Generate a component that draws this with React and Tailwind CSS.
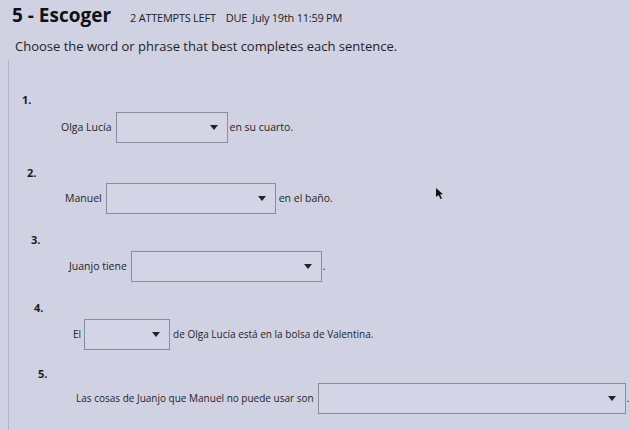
import React from "react";

function Select({ w }) {
  return (
    <div
      className="relative h-[31px] border border-[#8c8c98] bg-[#d4d4e7] shrink-0"
      style={{ width: w }}
    >
      <svg
        className="absolute right-[9px] top-[12px]"
        width="8"
        height="5"
        viewBox="0 0 8 5"
      >
        <polygon points="0,0 8,0 4,5" fill="#222" />
      </svg>
    </div>
  );
}

function Question({ n, nx, lx, mt, gap, small, children }) {
  return (
    <div style={{ marginTop: mt }}>
      <div
        className="text-[11px] leading-[14px] font-bold text-[#1b1b1f]"
        style={{ paddingLeft: nx }}
      >
        {n}.
      </div>
      <div
        className={
          small
            ? "flex items-center whitespace-nowrap text-[10px] text-[#1f1f24]"
            : "flex items-center whitespace-nowrap text-[10.5px] text-[#1f1f24]"
        }
        style={{ paddingLeft: lx, marginTop: gap }}
      >
        {children}
      </div>
    </div>
  );
}

export default function App() {
  return (
    <div
      className="relative w-[630px] h-[430px] overflow-hidden bg-[#d1d1e4]"
      style={{ fontFamily: '"Open Sans", "Noto Sans", sans-serif' }}
    >
      <div className="absolute left-[8px] top-[60px] bottom-0 w-px bg-[#b3b3c4]" />
      <div className="flex items-baseline pl-[12px] pt-[1px]">
        <span className="text-[19px] leading-[28px] font-bold text-[#111114]">
          5 - Escoger
        </span>
        <span className="ml-[19px] text-[11px] text-[#1d1d22] tracking-[-0.25px]">
          2 ATTEMPTS LEFT
        </span>
        <span className="ml-[10px] text-[11px] text-[#1d1d22] tracking-[-0.2px]">
          DUE
        </span>
        <span className="ml-[5px] text-[11px] text-[#1d1d22] tracking-[-0.25px]">
          July 19th 11:59 PM
        </span>
      </div>
      <div className="pl-[15px] mt-[8px] text-[13px] leading-[18px] text-[#1f1f24]">
        Choose the word or phrase that best completes each sentence.
      </div>

      <Question n={1} nx={22} lx={61} mt={38} gap={5}>
        <span className="mr-[4px]">Olga Lucía</span>
        <Select w={112} />
        <span className="ml-[2px]">en su cuarto.</span>
      </Question>

      <Question n={2} nx={27} lx={65} mt={23} gap={3}>
        <span className="mr-[4px]">Manuel</span>
        <Select w={170} />
        <span className="ml-[3px]">en el baño.</span>
      </Question>

      <Question n={3} nx={31} lx={69} mt={19} gap={4}>
        <span className="mr-[4px]">Juanjo tiene</span>
        <Select w={191} />
        <span className="ml-[1px]">.</span>
      </Question>

      <Question n={4} nx={34} lx={73} mt={19} gap={4} small>
        <span className="mr-[3px]">El</span>
        <Select w={86} />
        <span className="ml-[3px]">de Olga Lucía está en la bolsa de Valentina.</span>
      </Question>

      <Question n={5} nx={38} lx={76} mt={17} gap={2} small>
        <span className="mr-[4px]">Las cosas de Juanjo que Manuel no puede usar son</span>
        <Select w={308} />
        <span className="ml-[1px]">.</span>
      </Question>

      <svg
        className="absolute left-[435px] top-[188px]"
        width="9"
        height="12"
        viewBox="0 0 9 12"
      >
        <path d="M1 0 L1 9 L3.5 7 L5.5 11 L7 10.3 L5 6.5 L8 6.3 Z" fill="#111" />
      </svg>
    </div>
  );
}
